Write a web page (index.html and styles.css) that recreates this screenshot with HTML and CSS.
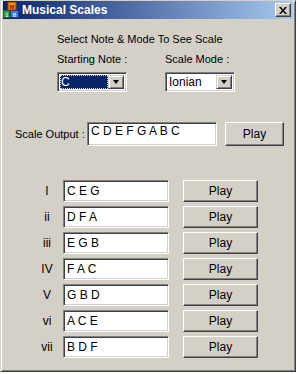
FILE: index.html
```html
<!DOCTYPE html>
<html lang="en">

<head>
    <meta charset="UTF-8">
    <title>Musical Scales</title>
    <link rel="stylesheet" href="styles.css">
</head>

<body>
    <div class="window">
        <!-- Title bar -->
        <div class="titlebar">
            <svg class="app-icon" width="16" height="16" viewBox="0 0 16 16">
                <rect x="5" y="0" width="8" height="8" fill="#f08a24" stroke="#a04000" />
                <text x="9" y="6.5" font-size="6" font-weight="bold" fill="#c00000" text-anchor="middle" font-family="Liberation Sans, sans-serif">M</text>
                <rect x="0.5" y="8.5" width="6" height="7" fill="#3aa04a" stroke="#1e6030" />
                <rect x="7.5" y="8.5" width="8" height="7" fill="#3b7dd8" stroke="#1c3f80" />
                <text x="4" y="14.5" font-size="6" fill="#fff" text-anchor="middle" font-family="Liberation Sans, sans-serif">1</text>
                <text x="11.5" y="14.5" font-size="6" fill="#fff" text-anchor="middle" font-family="Liberation Sans, sans-serif">8</text>
            </svg>
            <span class="title">Musical Scales</span>
            <div class="close-btn">
                <svg width="8" height="7" viewBox="0 0 8 7">
                    <path d="M0 0h2l2 2.5L6 0h2L5 3.5 8 7H6L4 4.5 2 7H0l3-3.5z" fill="#000" />
                </svg>
            </div>
        </div>

        <div class="content">
            <div class="intro">Select Note &amp; Mode To See Scale</div>

            <div class="pickers">
                <div class="picker">
                    <div class="picker-label">Starting Note :</div>
                    <div class="combo">
                        <div class="combo-value selected"><span>C</span></div>
                        <div class="combo-arrow"><i></i></div>
                    </div>
                </div>
                <div class="picker">
                    <div class="picker-label">Scale Mode :</div>
                    <div class="combo">
                        <div class="combo-value"><span>Ionian</span></div>
                        <div class="combo-arrow"><i></i></div>
                    </div>
                </div>
            </div>

            <div class="output-row">
                <div class="output-label">Scale Output :</div>
                <div class="textbox output-box">C D E F G A B C</div>
                <div class="btn output-btn">Play</div>
            </div>

            <div class="chords" id="chords"></div>
        </div>
    </div>

    <script>
        const chords = [
            ['I', 'C E G'],
            ['ii', 'D F A'],
            ['iii', 'E G B'],
            ['IV', 'F A C'],
            ['V', 'G B D'],
            ['vi', 'A C E'],
            ['vii', 'B D F']
        ];

        const chordList = document.getElementById('chords');
        chords.forEach(([degree, notes]) => {
            chordList.innerHTML += `
          <div class="degree">${degree}</div>
          <div class="textbox chord-box">${notes}</div>
          <div class="btn chord-btn">Play</div>
        `;
        });
    </script>
</body>

</html>
```

FILE: styles.css
```css
body {
    margin: 0;
    padding: 0;
    background: #fff;
    font-family: "Liberation Sans", Arial, sans-serif;
    font-size: 11px;
    color: #000;
}

.window {
    width: 296px;
    height: 372px;
    box-sizing: border-box;
    background: #d4d0c8;
    border: 1px solid;
    border-color: #d4d0c8 #404040 #404040 #d4d0c8;
    box-shadow: inset 1px 1px #fff, inset -1px -1px #808080;
    padding: 0 2px 2px 2px;
}

/* Title bar */
.titlebar {
    height: 18px;
    display: flex;
    align-items: center;
    background: linear-gradient(to right, #0a246a, #a6caf0);
    padding: 0 2px 0 0;
}

.app-icon {
    margin: 0 3px 0 0;
}

.title {
    flex: 1;
    color: #fff;
    font-weight: bold;
    font-size: 12px;
}

.close-btn {
    width: 16px;
    height: 14px;
    box-sizing: border-box;
    display: flex;
    align-items: center;
    justify-content: center;
    background: #d4d0c8;
    border: 1px solid;
    border-color: #fff #404040 #404040 #fff;
    box-shadow: inset -1px -1px #808080;
}

/* Content */
.content {
    padding-top: 14px;
}

.intro {
    margin-left: 54px;
    line-height: 13px;
}

.pickers {
    display: flex;
    gap: 38px;
    margin: 7px 0 0 54px;
}

.picker {
    width: 70px;
}

.picker-label {
    line-height: 13px;
    white-space: nowrap;
}

.combo {
    margin-top: 6px;
    height: 20px;
    box-sizing: border-box;
    display: flex;
    padding: 2px;
    background: #fff;
    border: 1px solid;
    border-color: #808080 #fff #fff #808080;
    box-shadow: inset 1px 1px #404040, inset -1px -1px #d4d0c8;
}

.combo-value {
    flex: 1;
    display: flex;
    align-items: center;
    font-size: 12px;
    padding-left: 1px;
}

.combo-value.selected {
    background: #0a246a;
    color: #fff;
    outline: 1px dotted #d4d0c8;
    outline-offset: -1px;
}

.combo-arrow {
    width: 16px;
    box-sizing: border-box;
    display: flex;
    align-items: center;
    justify-content: center;
    background: #d4d0c8;
    border: 1px solid;
    border-color: #d4d0c8 #404040 #404040 #d4d0c8;
    box-shadow: inset 1px 1px #fff, inset -1px -1px #808080;
}

.combo-arrow i {
    width: 0;
    height: 0;
    border-left: 3.5px solid transparent;
    border-right: 3.5px solid transparent;
    border-top: 4px solid #000;
}

/* Text boxes and buttons */
.textbox {
    box-sizing: border-box;
    background: #fff;
    border: 1px solid;
    border-color: #808080 #fff #fff #808080;
    box-shadow: inset 1px 1px #404040, inset -1px -1px #d4d0c8;
    padding-left: 3px;
    font-size: 12px;
    white-space: pre;
}

.btn {
    box-sizing: border-box;
    display: flex;
    align-items: center;
    justify-content: center;
    background: #d4d0c8;
    border: 1px solid;
    border-color: #fff #404040 #404040 #fff;
    box-shadow: inset -1px -1px #808080, inset 1px 1px #d4d0c8;
    font-size: 12px;
}

.output-row {
    display: flex;
    align-items: center;
    margin-top: 30px;
    padding-left: 12px;
}

.output-label {
    width: 72px;
    white-space: nowrap;
}

.output-box {
    width: 130px;
    height: 24px;
    padding-top: 1px;
}

.output-btn {
    width: 59px;
    height: 24px;
    margin-left: 8px;
}

.chords {
    display: grid;
    grid-template-columns: 30px 106px 89px;
    grid-auto-rows: 22px;
    row-gap: 4px;
    margin: 34px 0 0 30px;
}

.degree {
    display: flex;
    align-items: center;
    justify-content: center;
    padding-right: 2px;
    font-size: 12px;
}

.chord-box {
    display: flex;
    align-items: center;
}

.chord-btn {
    width: 75px;
    justify-self: end;
}
```
